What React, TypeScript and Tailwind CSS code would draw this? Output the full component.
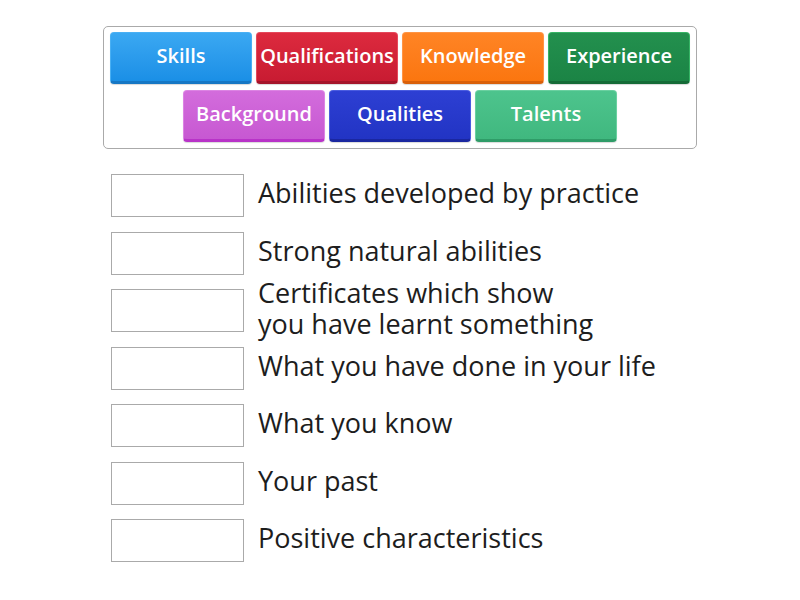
import React from "react";

// Word bank tiles: label, face gradient, rim and bottom edge colours
const tiles = [
  { label: "Skills", face: "bg-gradient-to-b from-[#3aa8f2] to-[#1a8fe6]", rim: "border-[#49b0f4]", edge: "border-b-[#1677c4]" },
  { label: "Qualifications", face: "bg-gradient-to-b from-[#dd2a3e] to-[#c81b32]", rim: "border-[#e5475a]", edge: "border-b-[#a5142a]" },
  { label: "Knowledge", face: "bg-gradient-to-b from-[#ff8424] to-[#fb760f]", rim: "border-[#ff9444]", edge: "border-b-[#d9600a]" },
  { label: "Experience", face: "bg-gradient-to-b from-[#23904e] to-[#1b8445]", rim: "border-[#36b465]", edge: "border-b-[#156b37]" },
  { label: "Background", face: "bg-gradient-to-b from-[#d36cdc] to-[#c758d2]", rim: "border-[#dc84e3]", edge: "border-b-[#b833c8]" },
  { label: "Qualities", face: "bg-gradient-to-b from-[#2d3fd3] to-[#2234c4]", rim: "border-[#4a5ce0]", edge: "border-b-[#1a27a0]" },
  { label: "Talents", face: "bg-gradient-to-b from-[#4dc48d] to-[#40b87f]", rim: "border-[#6ad0a0]", edge: "border-b-[#2f9c68]" },
];

const clues = [
  ["Abilities developed by practice"],
  ["Strong natural abilities"],
  ["Certificates which show", "you have learnt something"],
  ["What you have done in your life"],
  ["What you know"],
  ["Your past"],
  ["Positive characteristics"],
];

const Tile = ({ t }: { t: (typeof tiles)[number] }) => (
  <div
    className={`w-[142px] h-[52px] rounded-[4px] border border-b-[3px] ${t.rim} ${t.edge} ${t.face} flex items-center justify-center text-white text-[20px] font-semibold pb-[2px] shadow-[0_1px_1px_rgba(0,0,0,0.15)]`}
  >
    {t.label}
  </div>
);

export default function App() {
  return (
    <div className="w-[800px] h-[600px] bg-white font-['Open_Sans',sans-serif] pt-[26px]">
      <div className="mx-auto w-[594px] border border-[#aaaaaa] rounded-[5px] px-[6px] pt-[5px] pb-[6px] flex flex-wrap justify-center gap-x-[4px] gap-y-[6px]">
        {tiles.map((t) => (
          <Tile key={t.label} t={t} />
        ))}
      </div>

      <div className="ml-[111px] mt-[25px] flex flex-col gap-y-[14.5px]">
        {clues.map((lines, i) => (
          <div key={i} className="h-[43px] flex items-center gap-[14px]">
            <div className="w-[133px] h-[43px] shrink-0 border border-[#aaaaaa] bg-white" />
            <p className="text-[27px] leading-[31px] text-[#1d1d1d] -mt-[6px] whitespace-nowrap">
              {lines.map((l, j) => (
                <React.Fragment key={l}>
                  {j > 0 && <br />}
                  {l}
                </React.Fragment>
              ))}
            </p>
          </div>
        ))}
      </div>
    </div>
  );
}
